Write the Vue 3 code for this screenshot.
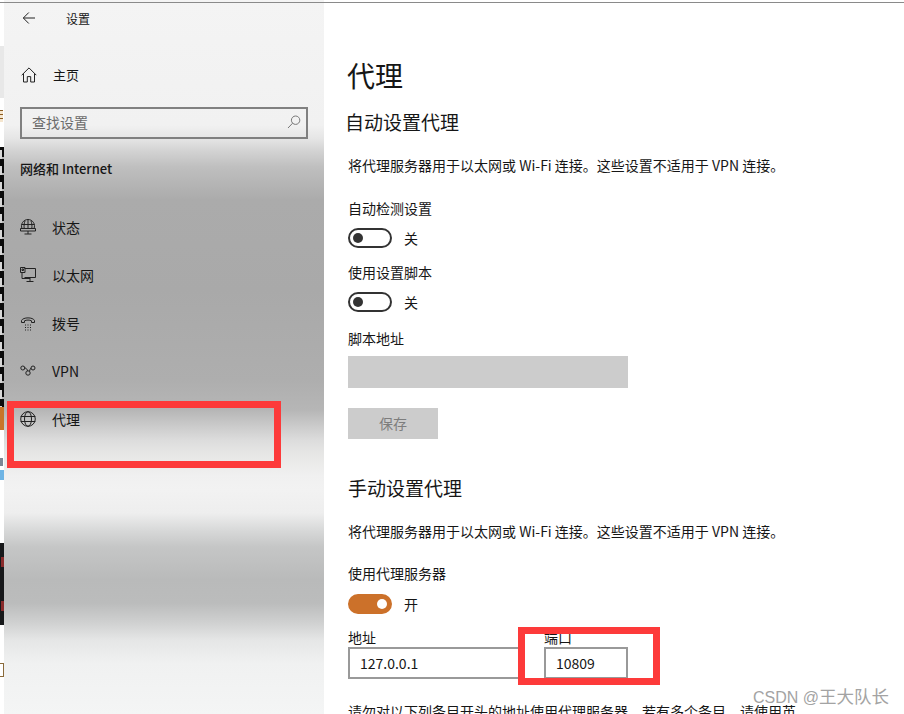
<script setup>
const navItems = [
  { label: '状态', icon: 'status' },
  { label: '以太网', icon: 'ethernet' },
  { label: '拨号', icon: 'dial' },
  { label: 'VPN', icon: 'vpn' },
  { label: '代理', icon: 'globe' }
]
</script>

<template>
  <div class="page">
    <div class="strip">
      <div class="strip-light"><i class="strip-glyph"></i></div>
      <div class="strip-dark"></div>
      <div class="strip-orange"></div>
      <div class="strip-white one"><i class="tick gray"></i><i class="tick blue"></i></div>
      <div class="strip-black"><i></i><i></i></div>
      <div class="strip-white two"><i class="strip-box"></i></div>
    </div>

    <aside class="sidebar">
      <div class="head">
        <svg class="back" width="14" height="14" viewBox="0 0 14 14"><path d="M13 7H1.500M6.800 1.500 1.300 7l5.500 5.500" fill="none" stroke="#222" stroke-width="1"/></svg>
        <span class="head-title">设置</span>
      </div>
      <div class="home">
        <svg width="16" height="16" viewBox="0 0 16 16"><path d="M.7 8.200 8 .9l7.300 7.300M2.500 6.600V15h3.800V9.600h3.400V15h3.800V6.600" fill="none" stroke="#222" stroke-width="1"/></svg>
        <span>主页</span>
      </div>
      <div class="search">
        <span>查找设置</span>
        <svg width="14" height="14" viewBox="0 0 14 14"><circle cx="8.600" cy="5.200" r="4.200" fill="none" stroke="#777" stroke-width="1"/><path d="M5.600 8.200 1 13" stroke="#777" stroke-width="1"/></svg>
      </div>
      <div class="section">网络和 Internet</div>
      <nav class="nav">
        <div v-for="item in navItems" :key="item.label" class="nav-item">
          <svg class="nav-icon" width="16" height="16" viewBox="0 0 16 16" fill="none" stroke="#222" stroke-width="1">
            <template v-if="item.icon === 'status'">
              <path d="M2 9.500A6.500 6.500 0 1 1 14 9.500M8 1v9M5 2C4 4 3.900 7 4.200 9.500M11 2c1 2 1.100 5 .8 7.500M1.700 5.500h12.600"/>
              <path d="M.5 9.500h15v2.500H.5zM8 12v3M4.500 15h7"/>
            </template>
            <template v-else-if="item.icon === 'ethernet'">
              <path d="M4.500 1.500h11v9h-11M.5.500h4.500v5H.5zM2 2h1.500v1.500H2zM2 5.500v6h8M10 10.500v4M6.500 14.500h7"/>
            </template>
            <template v-else-if="item.icon === 'dial'">
              <path d="M1.500 7.500V5.500C3 2 13 2 14.500 5.500v2h-3V5.800c-2-1-5-1-7 0v1.700z"/>
              <path d="M5 10h1M7.500 10h1M10 10h1M5 12.500h1M7.500 12.500h1M10 12.500h1M5 15h1M7.500 15h1M10 15h1"/>
            </template>
            <template v-else-if="item.icon === 'vpn'">
              <circle cx="2.800" cy="5" r="2"/><circle cx="13" cy="5" r="2"/><circle cx="8" cy="10" r="2.200"/>
              <path d="M4.800 5c1.400 0 2.400 1.200 2.800 2.900M9.500 8.300C10 6.300 10.500 5.300 11 5"/>
            </template>
            <template v-else>
              <circle cx="8" cy="8" r="7.300"/>
              <ellipse cx="8" cy="8" rx="3.500" ry="7.300"/>
              <path d="M.7 5.500h14.600M.7 10.500h14.600"/>
            </template>
          </svg>
          <span>{{ item.label }}</span>
        </div>
      </nav>
    </aside>

    <main class="main">
      <h1 class="title">代理</h1>
      <h2 class="sub first">自动设置代理</h2>
      <p class="desc">将代理服务器用于以太网或 Wi-Fi 连接。这些设置不适用于 VPN 连接。</p>
      <div class="label l-auto">自动检测设置</div>
      <div class="toggle-row">
        <span class="toggle"><b></b></span><span>关</span>
      </div>
      <div class="label l-script">使用设置脚本</div>
      <div class="toggle-row">
        <span class="toggle"><b></b></span><span>关</span>
      </div>
      <div class="label l-addr">脚本地址</div>
      <div class="disabled-input"></div>
      <div class="save">保存</div>
      <h2 class="sub second">手动设置代理</h2>
      <p class="desc">将代理服务器用于以太网或 Wi-Fi 连接。这些设置不适用于 VPN 连接。</p>
      <div class="label l-use">使用代理服务器</div>
      <div class="toggle-row on-row">
        <span class="toggle on"><b></b></span><span>开</span>
      </div>
      <div class="fields">
        <div class="field addr">
          <div class="field-label">地址</div>
          <div class="input">127.0.0.1</div>
        </div>
        <div class="field port">
          <div class="field-label">端口</div>
          <div class="input">10809</div>
        </div>
      </div>
      <p class="note">请勿对以下列条目开头的地址使用代理服务器。若有多个条目，请使用英</p>
    </main>

    <div class="mark one"></div>
    <div class="mark two"></div>
    <div class="watermark">CSDN @<span>王大队长</span></div>
  </div>
</template>

<style>
html, body { margin: 0; background: #fff; }
</style>

<style scoped>
.page {
  position: relative;
  width: 904px;
  height: 714px;
  display: flex;
  overflow: hidden;
  background: #fff;
  color: #161616;
  font-family: "Noto Sans CJK SC", "Noto Sans", sans-serif;
  font-size: 14px;
}
.page::before {
  content: "";
  position: absolute;
  left: 0; right: 0; top: 2px;
  height: 1px;
  background: #8a8a8a;
  z-index: 2;
}
.strip {
  width: 4px;
  flex: none;
  display: flex;
  flex-direction: column;
  overflow: hidden;
  background: #f2f2f2;
}
.strip i { display: block; }
.strip-light { height: 147px; padding-top: 110px; box-sizing: border-box; background: linear-gradient(#fff 0 46px, #e8e8e8 46px 98px, #fff 98px); }
.strip-glyph { height: 12px; width: 3px; background: repeating-linear-gradient(#8a5a20 0 1px, #f5e6cf 1px 4px); }
.strip-dark {
  height: 260px;
  background:
    repeating-linear-gradient(to bottom, #0b0b0b 0 3px, #d8d8d8 3px 12px, #0b0b0b 12px 16px) left / 2px 100% no-repeat,
    repeating-linear-gradient(to bottom, #0b0b0b 0 10px, #b5b5b5 10px 12px, #0b0b0b 12px 16px) right / 2px 100% no-repeat,
    #0b0b0b;
}
.strip-orange { height: 23px; background: #c87529; }
.strip-white.one { height: 113px; background: #fff; padding-top: 28px; box-sizing: border-box; }
.tick.gray { width: 3px; height: 8px; background: #7c8794; }
.tick.blue { width: 4px; height: 10px; margin-top: 4px; background: #6fb4e4; }
.strip-black { height: 82px; background: #17181a; padding-top: 14px; box-sizing: border-box; }
.strip-black i { width: 3px; height: 10px; margin: 0 0 34px 1px; background: #8a2b2b; }
.strip-white.two { flex: 1; background: #fff; padding-top: 38px; box-sizing: border-box; }
.strip-box { height: 12px; border: 1px solid #8a6a3a; border-left: 0; }

.sidebar {
  width: 320px;
  flex: none;
  box-sizing: border-box;
  padding: 0 0 0 16px;
  background: linear-gradient(to bottom,
    #f4f4f4 0, #f1f1f1 125px, #e6e6e6 138px, #d4d4d4 150px, #bfbfbf 167px, #ababab 200px,
    #a9a9a9 290px, #aeaeae 380px, #b6b6b6 410px, #cccccc 427px, #dcdcdc 440px, #e6e6e5 453px,
    #f0f0f0 475px, #f2f2f2 490px, #eeeeee 513px, #d8d9d9 530px, #c5c6c6 547px, #b9baba 580px,
    #bbbcbc 603px, #d0d1d1 623px, #e5e6e6 640px, #f0f1f1 663px, #f4f5f5 714px);
}
.head { height: 38px; display: flex; align-items: center; }
.back { margin: -2px 0 0 2px; }
.head-title { margin-left: 30px; font-size: 12px; margin-top: -1px; }
.home { display: flex; align-items: center; margin: 26px 0 0 1px; height: 22px; gap: 16px; font-size: 13px; line-height: 22px; }
.search {
  box-sizing: border-box;
  width: 288px;
  height: 32px;
  margin-top: 21px;
  padding: 0 5px 3px 10px;
  display: flex;
  align-items: center;
  justify-content: space-between;
  border: 2px solid #808080;
  color: #6b6b6b;
  font-size: 14px;
  line-height: 20px;
}
.section { margin-top: 18px; height: 24px; line-height: 24px; font-weight: 500; font-size: 13px; }
.nav { margin-top: 22px; }
.nav-item { height: 48px; display: flex; align-items: center; gap: 16px; font-size: 13px; }
.nav-item span { font-size: 14px; line-height: 20px; }
.nav-icon { flex: none; }

.main { flex: 1; min-width: 0; padding-left: 24px; }
.title { margin: 0 0 0 -1px; padding-top: 55px; font-size: 28px; line-height: 40px; font-weight: 400; }
.sub { margin: 0 0 0 -3px; font-size: 19px; line-height: 28px; font-weight: 400; }
.sub.first { margin-top: 13px; }
.sub.second { margin: 35px 0 0 0; }
.desc { margin: 19px 0 0; font-size: 14px; line-height: 20px; }
.label { font-size: 14px; line-height: 20px; }
.l-auto { margin-top: 23px; }
.l-script { margin-top: 14px; }
.l-addr { margin-top: 16px; }
.l-use { margin-top: 22px; }
.toggle-row { display: flex; align-items: center; gap: 12px; height: 20px; margin-top: 10px; line-height: 18px; }
.toggle-row.on-row { margin-top: 11px; }
.toggle { box-sizing: border-box; width: 44px; height: 20px; border: 2px solid #333; border-radius: 10px; position: relative; display: block; }
.toggle b { position: absolute; left: 3px; top: 3px; width: 10px; height: 10px; border-radius: 50%; background: #333; }
.toggle.on { background: #cc712a; border-color: #cc712a; }
.toggle.on b { left: auto; right: 3px; background: #fff; }
.disabled-input { width: 280px; height: 32px; margin-top: 8px; background: #ccc; }
.save { width: 90px; height: 31px; margin-top: 20px; background: #ccc; color: #7d7d7d; text-align: center; line-height: 31px; font-size: 14px; }
.fields { display: flex; margin-top: 13px; }
.field.addr { width: 196px; }
.field.addr .input { width: 176px; }
.field.port .input { width: 84px; }
.field-label { height: 20px; line-height: 20px; }
.input { box-sizing: border-box; height: 32px; border: 2px solid #999; padding-left: 10px; line-height: 28px; font-size: 14px; background: #fff; }
.note { margin: 22px 0 0; line-height: 20px; font-size: 14px; white-space: nowrap; }

.mark { position: absolute; box-sizing: border-box; border: 7px solid #fd3a3a; }
.mark.one { left: 7px; top: 401px; width: 274px; height: 67px; }
.mark.two { left: 518px; top: 627px; width: 142px; height: 58px; }
.watermark { position: absolute; left: 753px; top: 686px; color: #a3a3a3; font-family: "Liberation Sans", "Noto Sans CJK SC", sans-serif; font-size: 16px; line-height: 20px; white-space: nowrap; }
.watermark span { font-family: "Noto Sans CJK SC", sans-serif; font-size: 17.500px; }
</style>
